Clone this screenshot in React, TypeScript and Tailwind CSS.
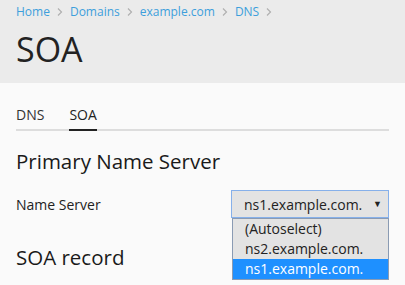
import React from "react";

const Chevron = () => (
  <svg width="6" height="10" viewBox="0 0 6 10" className="mx-[7px]" fill="none">
    <path d="M1 1.5 L4.5 5 L1 8.5" stroke="#b0b0b0" strokeWidth="1.2" />
  </svg>
);

export default function App() {
  const font = { fontFamily: '"Open Sans", "Noto Sans", sans-serif' };
  return (
    <div className="w-[405px] h-[285px] overflow-hidden bg-[#fafafa] text-[#222]" style={font}>
      <div className="h-[83px] bg-[#ebebeb] px-4 pt-[3px]">
        <div className="flex items-center h-[18px] text-[12px] text-[#3d9fdc]">
          <span>Home</span>
          <Chevron />
          <span>Domains</span>
          <Chevron />
          <span>example.com</span>
          <Chevron />
          <span>DNS</span>
          <Chevron />
        </div>
        <h1 className="text-[34px] leading-[46px] mt-[5px] text-[#222]">SOA</h1>
      </div>
      <div className="px-4">
        <div className="flex gap-[25px] mt-[22px] border-b-2 border-[#dddddd] text-[14px]">
          <div className="pb-[4px] leading-[20px] text-[#333]">DNS</div>
          <div className="pb-[2px] leading-[20px] border-b-2 border-[#222] -mb-[2px] text-[#222]">SOA</div>
        </div>
        <h2 className="text-[20.5px] leading-[28px] mt-[16px] text-[#1a1a1a]">Primary Name Server</h2>
        <div className="flex items-center mt-[15px] h-[28px]">
          <div className="w-[215px] text-[14px]">Name Server</div>
          <div className="relative w-[158px]">
            <div className="h-[28px] border border-[#86b0ea] bg-[#e3e3e3] flex items-center justify-between pl-[12px] pr-[6px] text-[14px] text-[#222]">
              <span>ns1.example.com.</span>
              <span className="text-[9px] text-[#222]">▼</span>
            </div>
            <div className="absolute left-[1px] right-0 top-[28px] border border-[#8a9bb3] bg-[#e3e3e3] text-[14px] z-10">
              <div className="h-[20px] leading-[20px] pl-[12px]">(Autoselect)</div>
              <div className="h-[20px] leading-[20px] pl-[12px]">ns2.example.com.</div>
              <div className="h-[20px] leading-[20px] pl-[12px] bg-[#1e90ff] text-white">ns1.example.com.</div>
            </div>
          </div>
        </div>
        <h2 className="text-[20.5px] leading-[28px] mt-[25px] text-[#1a1a1a]">SOA record</h2>
        <div className="flex mt-[14px]">
          <div className="w-[216px]" />
          <div className="w-[160px] h-[28px] border border-[#cccccc] bg-[#f0f0f0]" />
        </div>
      </div>
    </div>
  );
}
